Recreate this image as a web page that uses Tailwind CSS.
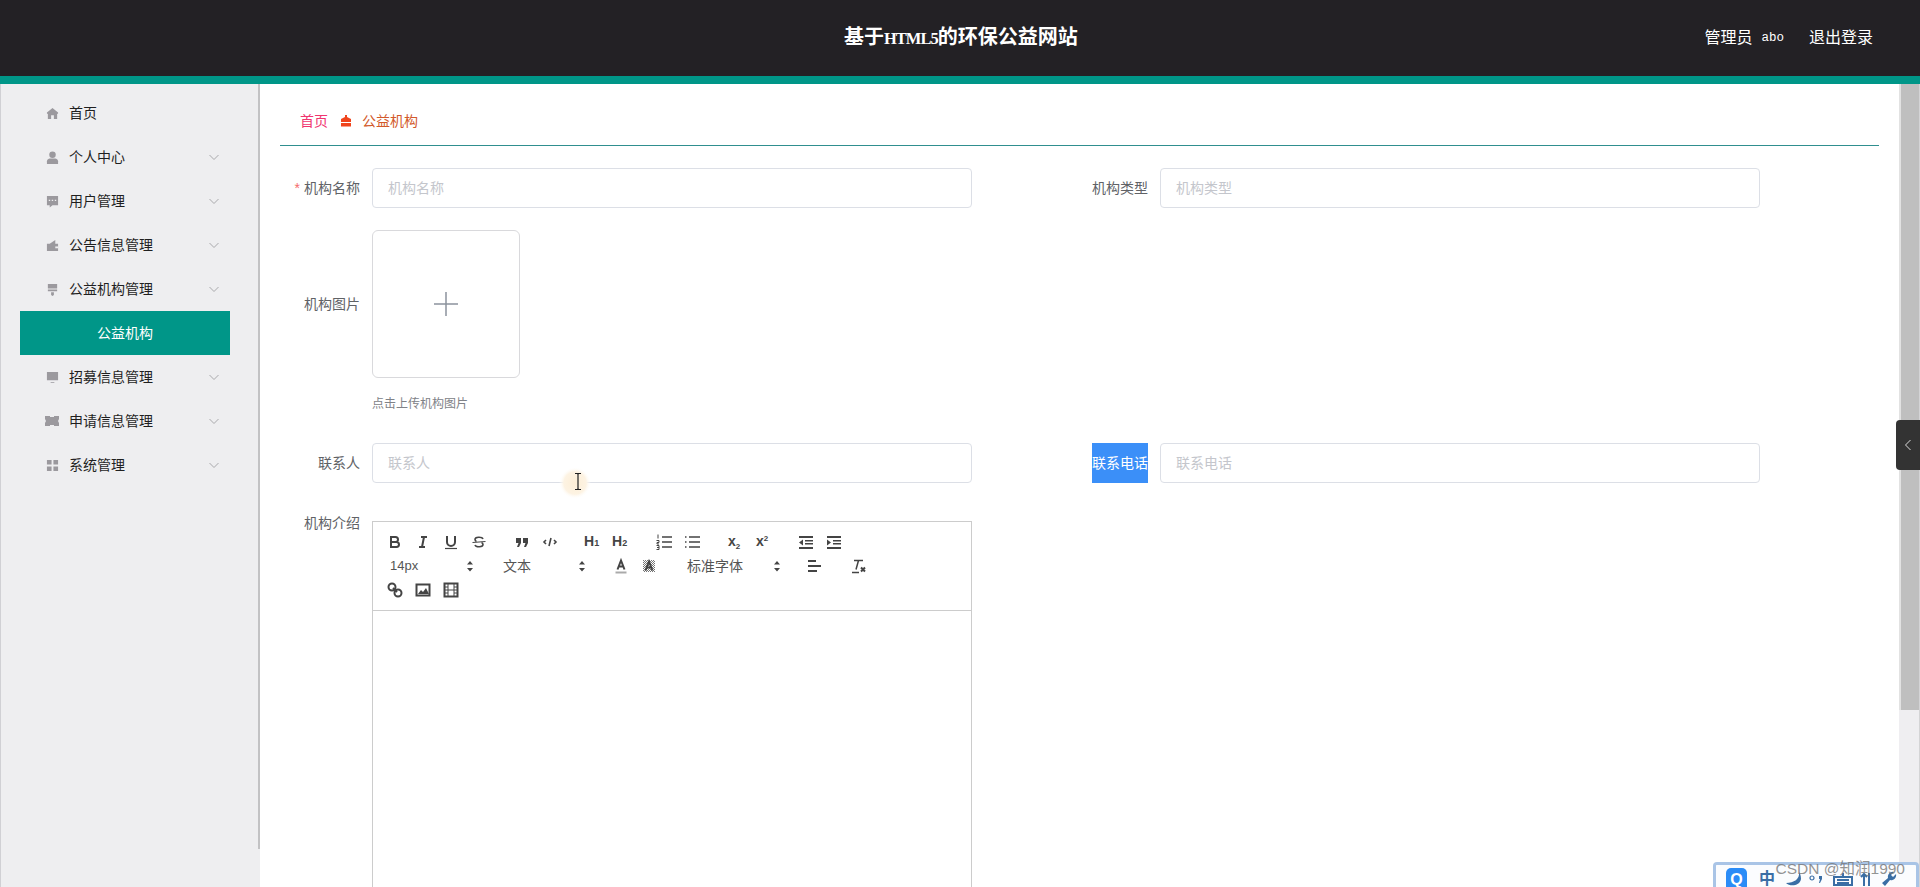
<!DOCTYPE html>
<html lang="zh"><head><meta charset="utf-8">
<script src="https://cdn.jsdelivr.net/npm/@tailwindcss/browser@4"></script>
</head>
<body class="relative h-[887px] w-[1920px] overflow-hidden bg-white font-['Liberation_Sans','Noto_Sans_CJK_SC',sans-serif] text-[14px]">
<header class="flex h-[84px] items-center justify-between border-b-[8px] border-[#009688] bg-[#232125] pl-[844px] pr-[47px] text-white">
  <div class="-mt-[3px] font-['Liberation_Serif','Noto_Sans_CJK_SC',serif] text-[20px] font-bold">基于<span class="text-[16.500px] tracking-[-1px]">HTML5</span>的环保公益网站</div>
  <div class="flex items-center text-[16px]"><span>管理员</span><span class="ml-[9px] font-['Liberation_Mono',monospace] text-[12.500px]">abo</span><span class="ml-[25px]">退出登录</span></div>
</header>
<div class="flex h-[803px]">
  <aside class="flex h-[803px] w-[260px] shrink-0 border-l border-l-[#d0d0d4] bg-[#eeeef0]">
    <nav class="w-[257px] shrink-0 pt-[7px] text-[14px] text-[#1f1f1f]">
      <a class="flex h-[44px] w-[230px] items-center pl-[45px]"><svg class="mr-[10px] h-[13px] w-[13px] fill-[#9b999e]" viewBox="0 0 14 14"><path d="M7 1 1 6v1l1 .5V13h3.500V9h3v4H12V7.500l1-.5V6z"/></svg>首页</a>
      <a class="flex h-[44px] w-[230px] items-center pl-[45px]"><svg class="mr-[10px] h-[13px] w-[13px] fill-[#9b999e]" viewBox="0 0 14 14"><circle cx="7" cy="4" r="3.500"/><path d="M1 14v-3c0-2 2-3 3-3h6c1 0 3 1 3 3v3z"/></svg>个人中心<svg class="ml-auto mr-[12px] h-[10px] w-[10px] fill-none stroke-[#a8a8ab]" viewBox="0 0 10 10"><path d="m.5 3 4.500 4.500L9.500 3"/></svg></a>
      <a class="flex h-[44px] w-[230px] items-center pl-[45px]"><svg class="mr-[10px] h-[13px] w-[13px] fill-[#9b999e]" viewBox="0 0 14 14"><path d="M1 1h12v10H7l-3 2.500V11H1z"/><path fill="#eeeef0" d="M3 5h1.500v1.500H3zM6.200 5h1.500v1.500H6.200zM9.500 5H11v1.500H9.500z"/></svg>用户管理<svg class="ml-auto mr-[12px] h-[10px] w-[10px] fill-none stroke-[#a8a8ab]" viewBox="0 0 10 10"><path d="m.5 3 4.500 4.500L9.500 3"/></svg></a>
      <a class="flex h-[44px] w-[230px] items-center pl-[45px]"><svg class="mr-[10px] h-[13px] w-[13px] fill-[#9b999e]" viewBox="0 0 14 14"><path d="M1 5h3l6-4v4h3v8H1z"/><path fill="#eeeef0" d="M10 8h3v2h-3z"/></svg>公告信息管理<svg class="ml-auto mr-[12px] h-[10px] w-[10px] fill-none stroke-[#a8a8ab]" viewBox="0 0 10 10"><path d="m.5 3 4.500 4.500L9.500 3"/></svg></a>
      <a class="flex h-[44px] w-[230px] items-center pl-[45px]"><svg class="mr-[10px] h-[13px] w-[13px] fill-[#9b999e]" viewBox="0 0 14 14"><path d="M2 1h10v5H2zM2 7h10v2H2zM5.500 10h3v3l-1.500 1-1.500-1z"/></svg>公益机构管理<svg class="ml-auto mr-[12px] h-[10px] w-[10px] fill-none stroke-[#a8a8ab]" viewBox="0 0 10 10"><path d="m.5 3 4.500 4.500L9.500 3"/></svg></a>
      <a class="ml-[19px] flex h-[44px] w-[210px] items-center justify-center bg-[#009688] text-white">公益机构</a>
      <a class="flex h-[44px] w-[230px] items-center pl-[45px]"><svg class="mr-[10px] h-[13px] w-[13px] fill-[#9b999e]" viewBox="0 0 14 14"><path d="M1 1h12v9H1zM5 12h4v1H5z"/></svg>招募信息管理<svg class="ml-auto mr-[12px] h-[10px] w-[10px] fill-none stroke-[#a8a8ab]" viewBox="0 0 10 10"><path d="m.5 3 4.500 4.500L9.500 3"/></svg></a>
      <a class="flex h-[44px] w-[230px] items-center pl-[44px]"><svg class="mr-[10px] h-[14px] w-[14px] fill-[#9b999e]" viewBox="0 0 14 14"><path d="M0 2h5v1h4V2h5v3l-1 2 1 2v3H9v-1H5v1H0V9l1-2-1-2z"/></svg>申请信息管理<svg class="ml-auto mr-[12px] h-[10px] w-[10px] fill-none stroke-[#a8a8ab]" viewBox="0 0 10 10"><path d="m.5 3 4.500 4.500L9.500 3"/></svg></a>
      <a class="flex h-[44px] w-[230px] items-center pl-[45px]"><svg class="mr-[10px] h-[13px] w-[13px] fill-[#9b999e]" viewBox="0 0 14 14"><path d="M1 1h5v5H1zM8 1h5v5H8zM1 8h5v5H1zM8 8h5v5H8z"/></svg>系统管理<svg class="ml-auto mr-[12px] h-[10px] w-[10px] fill-none stroke-[#a8a8ab]" viewBox="0 0 10 10"><path d="m.5 3 4.500 4.500L9.500 3"/></svg></a>
    </nav>
    <div class="h-[765px] w-[2px] bg-[#c2c2c4]"></div>
  </aside>
  <main class="flex-1 pl-[20px]">
    <div class="flex h-[62px] w-[1599px] items-center border-b border-[#2f8f8f] pl-[20px] pt-[13px]">
      <span class="text-[#f0356f]">首页</span>
      <svg class="ml-[12px] mr-[10px] h-[12px] w-[12px] fill-[#f0441c]" viewBox="0 0 12 12"><path d="M5 0h2v2l4 2v3H1V4l4-2zM1 8h10v3.500H1z"/></svg>
      <span class="text-[#d2592a]">公益机构</span>
    </div>
    <form class="text-[#606266]">
      <div class="flex pt-[22px]">
        <label class="flex h-[40px] w-[80px] items-center justify-end"><span class="mr-[4px] text-[#f56c6c]">*</span>机构名称</label>
        <div class="ml-[12px] flex h-[40px] w-[600px] items-center rounded-[4px] border border-[#dcdfe6] pl-[15px] text-[#c4c6cc]">机构名称</div>
        <label class="ml-[120px] flex h-[40px] w-[56px] items-center justify-end">机构类型</label>
        <div class="ml-[12px] flex h-[40px] w-[600px] items-center rounded-[4px] border border-[#dcdfe6] pl-[15px] text-[#c4c6cc]">机构类型</div>
      </div>
      <div class="mt-[22px] flex">
        <label class="flex h-[148px] w-[80px] items-center justify-end">机构图片</label>
        <div class="ml-[12px]">
          <div class="flex h-[148px] w-[148px] items-center justify-center rounded-[6px] border border-[#d9d9dc]">
            <svg class="h-[24px] w-[24px] stroke-[#8c939d] stroke-[1.500px]" viewBox="0 0 24 24"><path d="M12 0v24M0 12h24"/></svg>
          </div>
          <div class="mt-[16px] text-[12px] leading-[20px] text-[#808287]">点击上传机构图片</div>
        </div>
      </div>
      <div class="mt-[29px] flex">
        <label class="flex h-[40px] w-[80px] items-center justify-end">联系人</label>
        <div class="ml-[12px] flex h-[40px] w-[600px] items-center rounded-[4px] border border-[#dcdfe6] pl-[15px] text-[#c4c6cc]">联系人</div>
        <label class="ml-[120px] flex h-[40px] w-[56px] items-center justify-center bg-[#3b8ff8] text-white">联系电话</label>
        <div class="ml-[12px] flex h-[40px] w-[600px] items-center rounded-[4px] border border-[#dcdfe6] pl-[15px] text-[#c4c6cc]">联系电话</div>
      </div>
      <div class="mt-[20px] flex">
        <label class="h-[40px] w-[80px] text-right leading-[40px]">机构介绍</label>
        <div class="ml-[12px] mt-[18px] h-[400px] w-[600px] border border-[#ccc]">
          <div class="h-[89px] border-b border-[#ccc] pl-[13px] pt-[8px] text-[#444]">
            <div class="flex h-[24px] items-center">
              <svg class="h-[18px] w-[18px] fill-none stroke-[#444] stroke-[2px]" viewBox="0 0 18 18"><path d="M5 4h4.500a2.500 2.500 0 0 1 0 5H5zm0 5h5.500a2.500 2.500 0 0 1 0 5H5z"/></svg>
              <svg class="ml-[10px] h-[18px] w-[18px] fill-none stroke-[#444] stroke-[2px]" viewBox="0 0 18 18"><path d="M7 4h6M5 14h6M10 4 8 14"/></svg>
              <svg class="ml-[10px] h-[18px] w-[18px] fill-none stroke-[#444] stroke-[2px]" viewBox="0 0 18 18"><path d="M5 3v6a4 4 0 0 0 8 0V3"/><path stroke-width="1.200" d="M3 15.500h12"/></svg>
              <svg class="ml-[10px] h-[18px] w-[18px] fill-none stroke-[#444] stroke-[2px]" viewBox="0 0 18 18"><path stroke-width="1.600" d="M13 6c-1-2.500-8-2.500-8 .5 0 1 .5 1.500 1.500 2M5 12c1 2.500 8 2.500 8-.5 0-1-.5-1.500-1.500-2"/><path stroke-width="1" d="M2.500 9.500 15.500 8.500"/></svg>
              <svg class="ml-[25px] h-[18px] w-[18px] fill-[#444]" viewBox="0 0 18 18"><path d="M3 5h5v5l-2 4H4l1.500-4H3zm7 0h5v5l-2 4h-2l1.500-4H10z"/></svg>
              <svg class="ml-[10px] h-[18px] w-[18px] fill-none stroke-[#444] stroke-[2px]" viewBox="0 0 18 18"><path stroke-width="1.600" d="M5 7 3 9l2 2M13 7l2 2-2 2M10 5 8 13"/></svg>
              <span class="ml-[25px] w-[18px] whitespace-nowrap text-[14px] font-bold leading-[18px]">H<span class="text-[9px]">1</span></span>
              <span class="ml-[10px] w-[18px] whitespace-nowrap text-[14px] font-bold leading-[18px]">H<span class="text-[9px]">2</span></span>
              <svg class="ml-[25px] h-[18px] w-[18px] fill-none stroke-[#444] stroke-[2px]" viewBox="0 0 18 18"><path stroke-width="1.700" d="M7 4h10M7 9h10M7 14h10"/><path stroke-width="1" d="M3 1.500v4M1.500 7.500h2.500v2H2V11h2M1.500 12.500H4v4H1.500M2 14.500h2"/></svg>
              <svg class="ml-[10px] h-[18px] w-[18px] fill-none stroke-[#444] stroke-[2px]" viewBox="0 0 18 18"><path stroke-width="1.700" d="M6 4h11M6 9h11M6 14h11M2 4h1.500M2 9h1.500M2 14h1.500"/></svg>
              <span class="ml-[25px] w-[18px] whitespace-nowrap pl-[2px] text-[14px] font-bold leading-[18px]">x<span class="relative top-[3px] text-[8px]">2</span></span>
              <span class="ml-[10px] w-[18px] whitespace-nowrap pl-[2px] text-[14px] font-bold leading-[18px]">x<span class="relative -top-[5px] text-[8px]">2</span></span>
              <svg class="ml-[25px] h-[18px] w-[18px] fill-[#444]" viewBox="0 0 18 18"><path d="M2 3h14v2H2zM8 7h8v1.500H8zM8 10h8v1.500H8zM2 14h14v2H2zM6 6.500v6l-4-3z"/></svg>
              <svg class="ml-[10px] h-[18px] w-[18px] fill-[#444]" viewBox="0 0 18 18"><path d="M2 3h14v2H2zM8 7h8v1.500H8zM8 10h8v1.500H8zM2 14h14v2H2zM2 6.500v6l4-3z"/></svg>
            </div>
            <div class="flex h-[24px] items-center text-[#555]">
              <span class="ml-[4px] w-[71px] text-[13px]">14px</span><svg class="h-[18px] w-[18px] fill-[#444]" viewBox="0 0 18 18"><path d="m9 4 3 3.500H6zM9 14.500l3-3.500H6z"/></svg>
              <span class="ml-[24px] w-[70px]">文本</span><svg class="h-[18px] w-[18px] fill-[#444]" viewBox="0 0 18 18"><path d="m9 4 3 3.500H6zM9 14.500l3-3.500H6z"/></svg>
              <svg class="ml-[21px] h-[18px] w-[18px] fill-none stroke-[#444] stroke-[2px]" viewBox="0 0 18 18"><path d="m5.500 12.500 3.500-9 3.500 9M6.500 9.500h5"/><path stroke="#aaa" d="M3.500 15.500h11"/></svg>
              <svg class="ml-[10px] h-[18px] w-[18px] fill-none stroke-[#444] stroke-[2px]" viewBox="0 0 18 18"><defs><pattern id="dither" width="2" height="2" patternUnits="userSpaceOnUse"><path fill="#777" stroke="none" d="M0 0h1v1H0zM1 1h1v1H1z"/></pattern></defs><path fill="url(#dither)" stroke="none" d="M3 3h12v12H3z"/><path d="m5.500 13.500 3.500-9 3.500 9M6.500 10.500h5"/></svg>
              <span class="ml-[29px] w-[81px]">标准字体</span><svg class="h-[18px] w-[18px] fill-[#444]" viewBox="0 0 18 18"><path d="m9 4 3 3.500H6zM9 14.500l3-3.500H6z"/></svg>
              <svg class="ml-[19px] h-[18px] w-[18px] fill-none stroke-[#444] stroke-[2px]" viewBox="0 0 18 18"><path d="M3 4h8M3 9h13M3 14h9"/></svg>
              <svg class="ml-[26px] h-[18px] w-[18px] fill-none stroke-[#444] stroke-[2px]" viewBox="0 0 18 18"><path stroke-width="1.500" d="M5 3.500h9M9.500 3.500l-2.500 9M3 15.500h7"/><path d="m12 10.500 4 4m0-4-4 4"/></svg>
            </div>
            <div class="flex h-[24px] items-center">
              <svg class="h-[18px] w-[18px] fill-none stroke-[#444] stroke-[2px]" viewBox="0 0 18 18"><circle cx="6" cy="6" r="3.500"/><circle cx="12" cy="12" r="3.500"/><path d="m7 7 4 4"/></svg>
              <svg class="ml-[10px] h-[18px] w-[18px] fill-none stroke-[#444] stroke-[2px]" viewBox="0 0 18 18"><rect x="2.500" y="3.500" width="13" height="11"/><path fill="#444" stroke="none" d="m4 13 3-4 2 2 3-4 3 6z"/></svg>
              <svg class="ml-[10px] h-[18px] w-[18px] fill-none stroke-[#444] stroke-[2px]" viewBox="0 0 18 18"><rect x="2.500" y="2.500" width="13" height="13"/><path stroke-width="1" d="M6 3v12M12 3v12M3 9h12M3 6h3M12 6h3M3 12h3M12 12h3"/></svg>
            </div>
          </div>
        </div>
      </div>
    </form>
  </main>
</div>
<svg class="absolute left-[559px] top-[467px] h-[32px] w-[32px]" viewBox="0 0 32 32"><defs><radialGradient id="halo"><stop offset="0" stop-color="#fdeed6"/><stop offset="0.7" stop-color="#fdf3e3"/><stop offset="1" stop-color="#fff" stop-opacity="0"/></radialGradient></defs><circle cx="16" cy="16" r="16" fill="url(#halo)"/><path fill="none" stroke="#222" stroke-width="1.200" d="M16 6.500h2.500l.5 1 .5-1H22M19 7.500v14M16 22.500h2.500l.5-1 .5 1H22"/></svg>
<div class="absolute right-0 top-[84px] h-[803px] w-[21px] border-r border-r-[#d4d4d6] bg-[#efeef1]"><div class="h-[626px] w-[20px] border-l-[2px] border-l-[#e2e2e2] bg-[#bfbfbf]"></div></div>
<div class="absolute right-0 top-[420px] flex h-[50px] w-[24px] items-center justify-center rounded-l-[4px] bg-[#333]"><svg class="h-[12px] w-[8px] fill-none stroke-[#ddd]" viewBox="0 0 8 12"><path d="M6.500 1 1.500 6l5 5"/></svg></div>
<div class="absolute left-[1713px] top-[862px] flex h-[25px] w-[206px] items-start overflow-hidden rounded-t-[4px] border-[3px] border-b-0 border-[#a9c4e6] bg-[#fbfcfe] pl-[10px] pt-[3px] text-[#3a6ea5]">
  <span class="flex h-[24px] w-[21px] shrink-0 items-center justify-center rounded-[5px] bg-[#2b8cf7] text-[16px] font-bold text-white">Q</span>
  <span class="ml-[12px] text-[16px] font-bold leading-[22px]">中</span>
  <svg class="ml-[10px] mt-[3px] h-[16px] w-[16px] shrink-0 fill-[#3a6ea5]" viewBox="0 0 16 16"><path d="M14 1c1 7-5 11-13 11 4 4 14 3 15-4 0-3-1-6-2-7z"/></svg>
  <svg class="ml-[8px] mt-[6px] h-[12px] w-[14px] shrink-0 fill-[#3a6ea5]" viewBox="0 0 14 12"><circle cx="3" cy="4" r="2" fill="none" stroke="#3a6ea5" stroke-width="1.200"/><path d="M10 2h3v3l-2 4h-1l1-4h-1z"/></svg>
  <svg class="ml-[10px] mt-[4px] h-[14px] w-[20px] shrink-0 fill-none stroke-[#3a6ea5] stroke-[2px]" viewBox="0 0 20 14"><path d="M1 13V5h18v8zM4 8h12M4 11h12M10 5V1"/></svg>
  <svg class="ml-[7px] mt-[4px] h-[14px] w-[12px] shrink-0 fill-none stroke-[#3a6ea5] stroke-[2px]" viewBox="0 0 12 14"><path d="M4 14V2M1 5l3-3 3 3M9 1v13"/></svg>
  <svg class="ml-[9px] mt-[3px] h-[16px] w-[16px] shrink-0 fill-[#3a6ea5]" viewBox="0 0 16 16"><path d="M15 3a5 5 0 0 1-6 6l-5 6-3-3 6-5a5 5 0 0 1 6-6l-3 3 2 2z"/></svg>
</div>
<div class="absolute right-[15px] top-[859px] text-[15.500px] leading-[20px] text-[#777]/80">CSDN @知润1990</div>
</body></html>
